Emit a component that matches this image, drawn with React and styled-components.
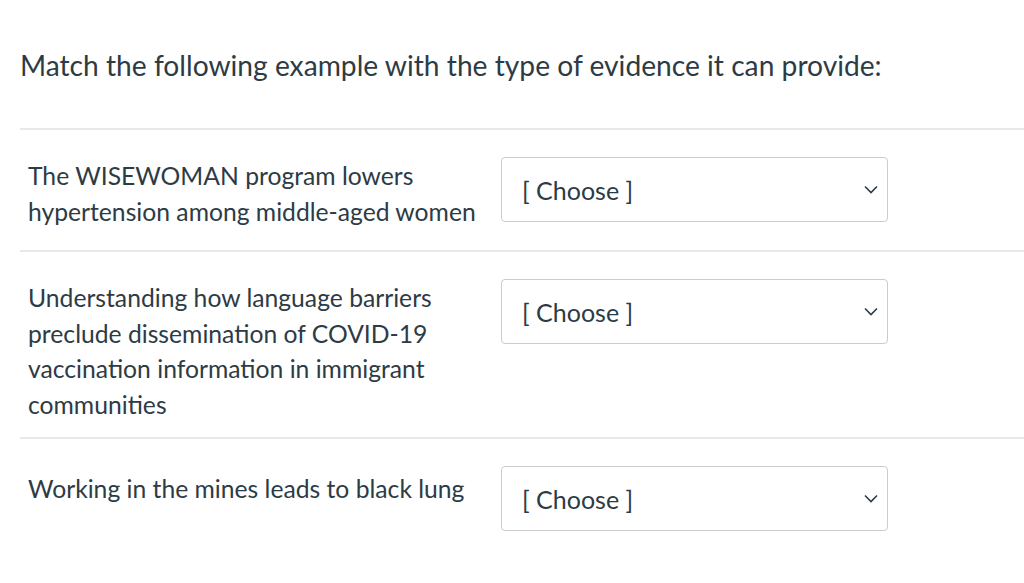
import React from "react";
import styled, { createGlobalStyle } from "styled-components";

const GlobalStyle = createGlobalStyle`
    html, body {
        margin: 0;
        padding: 0;
        background: #ffffff;
        font-family: Lato, "Open Sans", "Liberation Sans", sans-serif;
        color: #2d3b45;
    }
`;

const Page = styled.div`
    padding: 0 0 0 20px;
    overflow: hidden;
`;

const Question = styled.h2`
    margin: 0;
    padding: 48px 0 46px 0;
    font-size: 28.2px;
    font-weight: 400;
    line-height: 34px;
    color: #2d3b45;
    border-bottom: 2px solid #e6e8ea;
`;

const Row = styled.div`
    display: flex;
    align-items: flex-start;
    padding: 28px 0 ${(p) => p.bottom}px 8px;
    border-bottom: ${(p) => (p.last ? "none" : "2px solid #e6e8ea")};
`;

const Prompt = styled.div`
    width: 465px;
    margin-right: 8px;
    padding-top: ${(p) => p.offset}px;
    flex: none;
    font-size: 24.7px;
    line-height: 35.5px;
    color: #2d3b45;
`;

const Select = styled.div`
    width: 387px;
    height: 65px;
    box-sizing: border-box;
    margin-top: -1px;
    display: flex;
    align-items: center;
    justify-content: space-between;
    padding: 0 9px 0 20px;
    border: 1px solid #c7cdd1;
    border-radius: 4px;
    background: #fff;
    font-size: 25px;
    color: #2d3b45;
`;

const Chevron = () => (
    <svg width="14" height="9" viewBox="0 0 14 9" fill="none">
        <path d="M1 1.5 L7 7.5 L13 1.5" stroke="#2d3b45" strokeWidth="1.6" />
    </svg>
);

const items = [
    { text: "The WISEWOMAN program lowers hypertension among middle-aged women", bottom: 21, offset: 0 },
    {
        text: "Understanding how language barriers preclude dissemination of COVID-19 vaccination information in immigrant communities",
        bottom: 15,
        offset: 0,
    },
    { text: "Working in the mines leads to black lung", bottom: 40, offset: 4 },
];

const App = () => {
    return (
        <Page>
            <GlobalStyle />
            <Question>Match the following example with the type of evidence it can provide:</Question>
            {items.map((item, i) => (
                <Row key={i} bottom={item.bottom} last={i === items.length - 1}>
                    <Prompt offset={item.offset}>{item.text}</Prompt>
                    <Select>
                        <span>[ Choose ]</span>
                        <Chevron />
                    </Select>
                </Row>
            ))}
        </Page>
    );
};

export default App;
